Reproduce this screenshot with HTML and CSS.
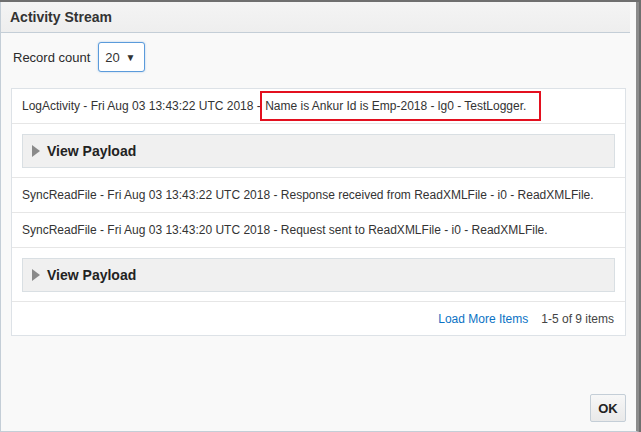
FILE: index.html
```html
<!DOCTYPE html>
<html lang="en">
<head>
  <meta charset="UTF-8">
  <title>Activity Stream</title>
  <link rel="stylesheet" href="styles.css">
</head>
<body>
  <div class="dialog">
    <div class="dialog-header">
      <h1 class="dialog-title">Activity Stream</h1>
    </div>

    <div class="dialog-body">
      <!-- record count selector -->
      <div class="record-count">
        <label class="record-label" for="count">Record count</label>
        <div class="select" id="count">
          <span class="select-value">20</span>
          <span class="select-arrow">&#9660;</span>
        </div>
      </div>

      <!-- stream list -->
      <div class="stream">
        <div class="stream-row">LogActivity - Fri Aug 03 13:43:22 UTC 2018 - <span class="highlight">Name is Ankur Id is Emp-2018 - lg0 - TestLogger.</span></div>
        <div class="payload-row">
          <div class="payload">
            <span class="payload-arrow"></span>
            <span class="payload-label">View Payload</span>
          </div>
        </div>
        <div class="stream-row">SyncReadFile - Fri Aug 03 13:43:22 UTC 2018 - Response received from ReadXMLFile - i0 - ReadXMLFile.</div>
        <div class="stream-row">SyncReadFile - Fri Aug 03 13:43:20 UTC 2018 - Request sent to ReadXMLFile - i0 - ReadXMLFile.</div>
        <div class="payload-row">
          <div class="payload">
            <span class="payload-arrow"></span>
            <span class="payload-label">View Payload</span>
          </div>
        </div>
        <div class="stream-footer">
          <a class="load-more" href="#">Load More Items</a>
          <span class="item-count">1-5 of 9 items</span>
        </div>
      </div>
    </div>

    <div class="dialog-footer">
      <button class="ok-btn">OK</button>
    </div>
  </div>
</body>
</html>
```

FILE: styles.css
```css
html, body {
  margin: 0;
  height: 100%;
}
body {
  background: #6f6f6f;
  font-family: "Liberation Sans", Arial, sans-serif;
  color: #333;
  padding-top: 2px;
  box-sizing: border-box;
  overflow: hidden;
}
.dialog {
  width: 639px;
  height: 430px;
  box-sizing: border-box;
  background: #f9f9f9;
  border-left: 1px solid #c4ced7;
  border-bottom: 1px solid #c4ced7;
  border-right: 3px solid #8c8c8c;
  display: flex;
  flex-direction: column;
}
.dialog-header {
  height: 30px;
  margin-right: 6px;
  background: linear-gradient(#f4f4f4, #eeeeee);
  border-bottom: 1px solid #c4ced7;
  display: flex;
  align-items: center;
  padding-left: 9px;
}
.dialog-title {
  margin: 0;
  font-size: 14px;
  font-weight: bold;
  color: #333;
}
.dialog-body {
  flex: 1;
  padding: 9px 10px 0;
}
.record-count {
  display: flex;
  align-items: center;
  gap: 8px;
  padding-left: 2px;
}
.record-label {
  font-size: 13px;
  color: #2b2b2b;
}
.select {
  width: 47px;
  height: 30px;
  box-sizing: border-box;
  background: #fff;
  border: 1px solid #5b9bdb;
  border-radius: 3px;
  box-shadow: 0 0 2px rgba(91, 155, 219, 0.5);
  display: flex;
  align-items: center;
  justify-content: space-between;
  padding: 0 9px 0 6px;
}
.select-value {
  font-size: 13px;
  color: #333;
}
.select-arrow {
  font-size: 10px;
  color: #333;
}
.stream {
  margin-top: 16px;
  background: #fff;
  border: 1px solid #dde2e7;
  font-size: 12px;
}
.stream-row {
  line-height: 34px;
  padding: 0 10px;
  border-bottom: 1px solid #e6e6e6;
  white-space: nowrap;
}
.highlight {
  outline: 2px solid #e3101f;
  padding: 6px 13px 6px 3px;
  margin-left: -2px;
}
.payload-row {
  padding: 10px 10px 9px;
  border-bottom: 1px solid #e6e6e6;
}
.payload {
  height: 32px;
  background: #f0f0f0;
  border: 1px solid #d9dfe3;
  display: flex;
  align-items: center;
  gap: 7px;
  padding-left: 9px;
}
.payload-arrow {
  width: 0;
  height: 0;
  border-top: 6px solid transparent;
  border-bottom: 6px solid transparent;
  border-left: 8px solid #8a8a8a;
}
.payload-label {
  font-size: 14px;
  font-weight: bold;
  color: #222;
}
.stream-footer {
  height: 33px;
  display: flex;
  align-items: center;
  justify-content: flex-end;
  gap: 13px;
  padding-right: 11px;
}
.load-more {
  color: #0b72c4;
  text-decoration: none;
}
.item-count {
  color: #444;
}
.dialog-footer {
  display: flex;
  justify-content: flex-end;
  padding: 0 10px 9px;
}
.ok-btn {
  width: 36px;
  height: 28px;
  font-family: inherit;
  font-size: 13px;
  font-weight: bold;
  color: #222;
  background: linear-gradient(#f7f7f7, #e9e9e9);
  border: 1px solid #c4ced7;
  border-radius: 2px;
  padding: 0;
}
```
